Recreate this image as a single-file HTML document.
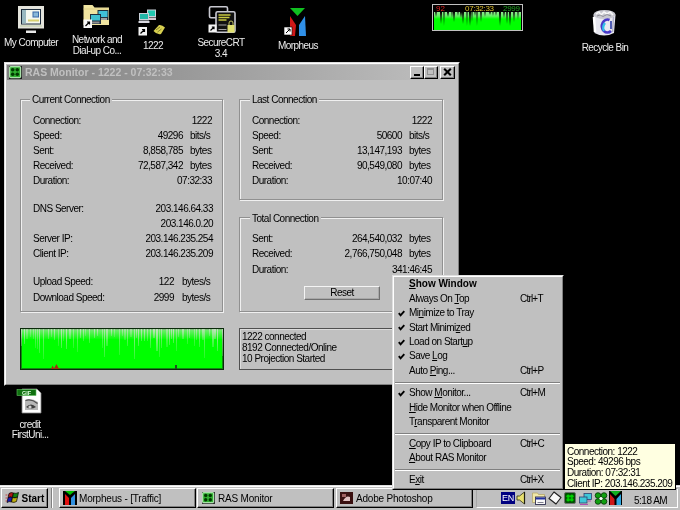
<!DOCTYPE html>
<html><head><meta charset="utf-8">
<style>
html,body{margin:0;padding:0;}
body{width:680px;height:510px;background:#000;position:relative;overflow:hidden;font-family:"Liberation Sans",sans-serif;}
.a{position:absolute;}
.t{position:absolute;font-size:10px;line-height:12px;letter-spacing:-0.5px;white-space:nowrap;color:#000;}
.r{text-align:right;}
.dl{position:absolute;color:#ececec;font-size:10px;line-height:12px;letter-spacing:-0.55px;white-space:nowrap;text-align:center;width:80px;}
.gb{position:absolute;border:1px solid #909090;box-shadow:1px 1px 0 #f0f0f0 inset, 1px 1px 0 #f0f0f0;}
.gl{position:absolute;background:#c0c0c0;padding:0 2px;font-size:10px;line-height:12px;letter-spacing:-0.5px;white-space:nowrap;}
.raised{position:absolute;box-sizing:border-box;background:#c0c0c0;border-top:1px solid #fff;border-left:1px solid #fff;border-right:1px solid #000;border-bottom:1px solid #000;}
.raised::after{content:"";position:absolute;left:0;top:0;right:0;bottom:0;border-right:1px solid #808080;border-bottom:1px solid #808080;}
u{text-decoration:underline;text-underline-offset:1px;text-decoration-thickness:1px;}
.mi{position:absolute;left:409px;font-size:10px;line-height:12px;letter-spacing:-0.5px;white-space:nowrap;color:#000;}
.mk{position:absolute;left:520px;font-size:10px;line-height:12px;letter-spacing:-0.8px;white-space:nowrap;color:#000;}
.ck{position:absolute;left:397.5px;width:7px;height:7px;}
</style></head><body><div id="wrap" style="position:absolute;left:0;top:0;width:680px;height:510px;background:#000;will-change:transform;">

<!-- ============ DESKTOP ICONS ============ -->

<!-- My Computer -->
<svg class="a" style="left:18px;top:6px;" width="27" height="28" viewBox="0 0 27 28">
  <rect x="0" y="0" width="26" height="22.5" fill="#e4e4dc"/>
  <rect x="3" y="3" width="20" height="15.5" fill="#1c2c3c"/>
  <rect x="4" y="4" width="18" height="13.5" fill="#f4f8f0"/>
  <rect x="4" y="4" width="4" height="13.5" fill="#98b8c0"/>
  <rect x="14.5" y="5.5" width="6.5" height="6" fill="#3868a8"/>
  <rect x="15.5" y="6.5" width="4.5" height="4" fill="#88b8d8"/>
  <rect x="10" y="13.5" width="11" height="2" fill="#d8d070"/>
  <rect x="2" y="19" width="22" height="2" fill="#d0d8c0"/>
  <rect x="8" y="24.5" width="10" height="2.5" fill="#e8e8e8"/>
</svg>
<div class="dl" style="left:-9px;top:37px;">My Computer</div>

<!-- Network and Dial-up -->
<svg class="a" style="left:82px;top:2px;" width="30" height="27" viewBox="0 0 30 27">
  <path d="M1.5 3 h9 l2 2.5 h14.5 v17.5 h-25.5 z" fill="#f0e4a0"/>
  <path d="M1.5 7 h25.5" stroke="#d8c880" stroke-width="0.8"/>
  <rect x="15.5" y="8" width="11" height="10" fill="#203040"/>
  <rect x="16.5" y="9" width="9" height="6" fill="#40c0d8"/>
  <rect x="17" y="16" width="8" height="2" fill="#a0a0a0"/>
  <rect x="8" y="12" width="11" height="10" fill="#203040"/>
  <rect x="9" y="13" width="9" height="5.5" fill="#40c0d0"/>
  <rect x="9.5" y="19.5" width="8" height="2" fill="#909090"/>
  <rect x="1.5" y="17.5" width="8.5" height="8.5" fill="#f8f8f8"/>
  <path d="M3.5 24 l4 -4 m-2.5 0 h2.5 v2.5" stroke="#000" stroke-width="1.2" fill="none"/>
</svg>
<div class="dl" style="left:57px;top:33.5px;">Network and</div>
<div class="dl" style="left:57px;top:44.5px;">Dial-up Co...</div>

<!-- 1222 -->
<svg class="a" style="left:138px;top:9px;" width="29" height="27" viewBox="0 0 29 27">
  <rect x="9" y="0.5" width="9" height="8" fill="#c8d0d8"/>
  <rect x="10" y="1.5" width="7" height="5.5" fill="#20c8b0"/>
  <rect x="9" y="9" width="9" height="2" fill="#d0c8d0"/>
  <rect x="1" y="4" width="10" height="7.5" fill="#c8d0d8"/>
  <rect x="2" y="5" width="8" height="5" fill="#20b8a8"/>
  <rect x="0.5" y="12" width="11" height="2" fill="#d8d8e0"/>
  <rect x="0.5" y="18" width="8.5" height="8.5" fill="#f4f4f4"/>
  <path d="M2.5 24.5 l4 -4 m-2.5 0 h2.5 v2.5" stroke="#000" stroke-width="1.2" fill="none"/>
  <path d="M15.5 22 L21 16 Q24 15.5 27 18.5 L23 25 Q19 26 15.5 22 Z" fill="#d8d050"/>
  <path d="M18 21 l4 -3 M19.5 23 l4 -3" stroke="#707020" stroke-width="0.8"/>
</svg>
<div class="dl" style="left:113px;top:40px;">1222</div>

<!-- SecureCRT -->
<svg class="a" style="left:207px;top:5px;" width="30" height="29" viewBox="0 0 30 29">
  <rect x="2.5" y="1.8" width="18" height="11" rx="1.5" fill="none" stroke="#c8c8d0" stroke-width="1.6"/>
  <rect x="9" y="6.8" width="19" height="20.5" rx="1.5" fill="#101010" stroke="#c8c8d0" stroke-width="1.6"/>
  <path d="M11.5 10 h12 M11.5 12.5 h11 M11.5 15 h8" stroke="#c8c840" stroke-width="1.3"/>
  <path d="M11.5 20 h8 M11.5 24.5 h8" stroke="#a0a0a0" stroke-width="1"/>
  <rect x="20.5" y="20" width="7" height="7.5" fill="#e0e070"/>
  <path d="M22 20 v-2 a2 2 0 0 1 4 0 v2" stroke="#c0c060" stroke-width="1" fill="none"/>
  <rect x="1.5" y="19.5" width="8" height="8" fill="#f4f4f4"/>
  <path d="M3.5 25.5 l3.5 -3.5 m-2.2 0 h2.2 v2.2" stroke="#000" stroke-width="1.2" fill="none"/>
</svg>
<div class="dl" style="left:181px;top:37px;">SecureCRT</div>
<div class="dl" style="left:181px;top:47.5px;">3.4</div>

<!-- Morpheus -->
<svg class="a" style="left:283px;top:7px;" width="26" height="30" viewBox="0 0 26 30">
  <path d="M7 1 L22 1 L14.5 9 Z" fill="#10c020"/>
  <path d="M7 9 L13 18 L12 29 L7 29 Z" fill="#d01818"/>
  <path d="M22 9 L16 18 L16 29 L23 29 Z" fill="#3090e8"/>
  <rect x="1" y="20" width="8" height="8" fill="#fff" stroke="#000" stroke-width="0.6"/>
  <path d="M3 26 l4 -4 m-2.5 0 h2.5 v2.5" stroke="#000" stroke-width="1" fill="none"/>
</svg>
<div class="dl" style="left:258px;top:39.5px;">Morpheus</div>

<!-- Monitor widget -->
<div class="a" style="left:432px;top:4px;width:91px;height:27px;box-sizing:border-box;border:1px solid #c0c0c0;background:#000;overflow:hidden;">
  <div class="a" style="left:1px;top:7px;width:87px;height:18px;background:linear-gradient(#90e890 0,#60f060 4px,#00ff00 7px);"></div>
  <svg class="a" style="left:1px;top:7px;" width="87" height="18" viewBox="0 0 87 18">
    <path d="M1.2 0 L2.8 0 L2.0 5 Z M6.0 0 L8.0 0 L7.0 12 Z M9.4 0 L10.6 0 L10.0 14 Z M13.0 0 L15.0 0 L14.0 5 Z M17.4 0 L18.6 0 L18.0 6 Z M19.0 0 L21.0 0 L20.0 10 Z M23.4 0 L24.6 0 L24.0 4 Z M26.0 0 L28.0 0 L27.0 6 Z M28.0 0 L30.0 0 L29.0 12 Z M32.4 0 L33.6 0 L33.0 14 Z M35.0 0 L37.0 0 L36.0 14 Z M37.4 0 L38.6 0 L38.0 10 Z M40.4 0 L41.6 0 L41.0 4 Z M42.4 0 L43.6 0 L43.0 14 Z M46.2 0 L47.8 0 L47.0 10 Z M50.4 0 L51.6 0 L51.0 5 Z M55.2 0 L56.8 0 L56.0 3 Z M58.4 0 L59.6 0 L59.0 4 Z M61.4 0 L62.6 0 L62.0 4 Z M65.0 0 L67.0 0 L66.0 14 Z M69.2 0 L70.8 0 L70.0 6 Z M72.2 0 L73.8 0 L73.0 12 Z M75.0 0 L77.0 0 L76.0 14 Z M79.2 0 L80.8 0 L80.0 10 Z M83.4 0 L84.6 0 L84.0 8 Z " fill="#000"/>
  </svg>
  <div class="a" style="left:3px;top:-1px;font-size:8px;line-height:10px;color:#e02020;">92</div>
  <div class="a" style="left:32px;top:-1px;font-size:8px;line-height:10px;color:#e0c030;letter-spacing:-0.3px;">07:32:33</div>
  <div class="a" style="left:70px;top:-1px;font-size:8px;line-height:10px;color:#20a020;letter-spacing:-0.3px;">2999</div>
</div>

<!-- Recycle Bin -->
<svg class="a" style="left:592px;top:9px;" width="25" height="28" viewBox="0 0 25 28">
  <path d="M1.5 6 L2.5 24 Q12 29 22 24 L23.5 6 Z" fill="#e8e8f0"/>
  <path d="M2 8 L3 23" stroke="#fff" stroke-width="2.5"/>
  <path d="M21.5 8 L20.5 23" stroke="#b0b0c8" stroke-width="1.5"/>
  <ellipse cx="12.5" cy="5.5" rx="11" ry="4.5" fill="#c8c8d0"/>
  <path d="M4 5 l3 -2 l2 3 l3 -3 l3 2 l3 -2 l3 3" stroke="#f8f8f8" stroke-width="1.6" fill="none"/>
  <path d="M5 7 l3 -1 l3 1.5 l4 -2 l4 1.5" stroke="#909098" stroke-width="1" fill="none"/>
  <path d="M17.5 11 a5.5 6.5 0 1 0 1.5 11" stroke="#4838c8" stroke-width="2.6" fill="none"/>
  <path d="M12 22 q-2 -4 1 -8" stroke="#30c0e8" stroke-width="2.2" fill="none"/>
  <path d="M19 12 v8" stroke="#2030a0" stroke-width="1.5"/>
</svg>
<div class="dl" style="left:565px;top:41.5px;">Recycle Bin</div>

<!-- credit FirstUni GIF -->
<svg class="a" style="left:16px;top:388px;" width="28" height="26" viewBox="0 0 28 26">
  <path d="M6 1 h15 l4 4 v20 h-19 z" fill="#fff" stroke="#808080" stroke-width="0.8"/>
  <path d="M9 12 q6 -3 13 2 v8 h-13 z" fill="#b8b8b8"/>
  <path d="M9.5 12.5 q6 -2 12 3" stroke="#505050" stroke-width="1.2" fill="none"/>
  <path d="M10 19 q5 -5 10 0 q-5 3 -10 0 z" fill="#404040"/>
  <circle cx="14" cy="19" r="1.6" fill="#d0d0d0"/>
  <rect x="1" y="1.5" width="19" height="6" fill="#107010" stroke="#60c060" stroke-width="0.6"/>
  <text x="10.5" y="6.5" font-size="5.5" font-family="Liberation Sans" font-weight="bold" fill="#e0ffe0" text-anchor="middle">GIF</text>
</svg>
<div class="dl" style="left:-10px;top:419px;">credit</div>
<div class="dl" style="left:-10px;top:429px;">FirstUni...</div>


<!-- ============ WINDOW ============ -->
<div class="a" style="left:4px;top:62px;width:456px;height:324px;background:#c0c0c0;box-sizing:border-box;border-top:1px solid #dfdfdf;border-left:1px solid #dfdfdf;border-right:1px solid #000;border-bottom:1px solid #000;">
  <div class="a" style="left:0;top:0;right:0;bottom:0;border-top:1px solid #fff;border-left:1px solid #fff;border-right:1px solid #808080;border-bottom:1px solid #808080;"></div>
</div>
<div class="a" style="left:7px;top:65px;width:450px;height:15px;background:linear-gradient(to right,#808080,#c0c0c0);"></div>
<div class="a" style="left:25px;top:65px;font-size:10.5px;line-height:15px;font-weight:bold;color:#c0c0c0;white-space:nowrap;">RAS Monitor - 1222 - 07:32:33</div>

<!-- title icon -->
<svg class="a" style="left:9px;top:66px;" width="13" height="13" viewBox="0 0 13 13">
  <rect x="0" y="0" width="13" height="13" fill="#202020"/>
  <rect x="0.6" y="0.6" width="11" height="11" rx="1.2" fill="#30b030" stroke="#a8e0a8" stroke-width="1.2"/>
  <circle cx="3.7" cy="3.7" r="1.8" fill="#003a00"/><circle cx="8.3" cy="3.7" r="1.8" fill="#003a00"/>
  <circle cx="3.7" cy="8.3" r="1.8" fill="#003a00"/><circle cx="8.3" cy="8.3" r="1.8" fill="#003a00"/>
</svg>
<!-- caption buttons -->
<div class="raised" style="left:410px;top:66px;width:14px;height:13px;"></div>
<div class="a" style="left:414px;top:74px;width:6px;height:2px;background:#000;"></div>
<div class="raised" style="left:424px;top:66px;width:14px;height:13px;"></div>
<div class="a" style="left:427px;top:68px;width:7px;height:7px;box-sizing:border-box;border:1px solid #909090;border-top-width:2px;"></div>
<div class="raised" style="left:440px;top:66px;width:15px;height:13px;"></div>
<svg class="a" style="left:443px;top:68px;" width="9" height="8" viewBox="0 0 9 8"><path d="M1.2 0.8 L7.8 7.2 M7.8 0.8 L1.2 7.2" stroke="#000" stroke-width="2.1"/></svg>
<!-- group boxes -->
<div class="gb" style="left:20px;top:99px;width:201px;height:211px;"></div>
<div class="gl" style="left:30px;top:94px;">Current Connection</div>
<div class="gb" style="left:239px;top:99px;width:202px;height:99px;"></div>
<div class="gl" style="left:250px;top:94px;">Last Connection</div>
<div class="gb" style="left:239px;top:217px;width:202px;height:93px;"></div>
<div class="gl" style="left:250px;top:213px;">Total Connection</div>

<!-- current connection -->
<div class="t" style="left:33px;top:115px;">Connection:</div>
<div class="t" style="left:33px;top:130px;">Speed:</div>
<div class="t" style="left:33px;top:145px;">Sent:</div>
<div class="t" style="left:33px;top:160px;">Received:</div>
<div class="t" style="left:33px;top:175px;">Duration:</div>
<div class="t r" style="right:468px;top:115px;">1222</div>
<div class="t r" style="right:497px;top:130px;">49296</div>
<div class="t" style="left:190px;top:130px;">bits/s</div>
<div class="t r" style="right:497px;top:145px;">8,858,785</div>
<div class="t" style="left:190px;top:145px;">bytes</div>
<div class="t r" style="right:497px;top:160px;">72,587,342</div>
<div class="t" style="left:190px;top:160px;">bytes</div>
<div class="t r" style="right:468px;top:175px;">07:32:33</div>

<div class="t" style="left:33px;top:203px;">DNS Server:</div>
<div class="t r" style="right:467px;top:203px;">203.146.64.33</div>
<div class="t r" style="right:467px;top:218px;">203.146.0.20</div>
<div class="t" style="left:33px;top:233px;">Server IP:</div>
<div class="t r" style="right:467px;top:233px;">203.146.235.254</div>
<div class="t" style="left:33px;top:248px;">Client IP:</div>
<div class="t r" style="right:467px;top:248px;">203.146.235.209</div>
<div class="t" style="left:33px;top:276px;">Upload Speed:</div>
<div class="t r" style="right:506px;top:276px;">122</div>
<div class="t" style="left:182px;top:276px;">bytes/s</div>
<div class="t" style="left:33px;top:291.5px;">Download Speed:</div>
<div class="t r" style="right:506px;top:291.5px;">2999</div>
<div class="t" style="left:182px;top:291.5px;">bytes/s</div>

<!-- last connection -->
<div class="t" style="left:252px;top:115px;">Connection:</div>
<div class="t" style="left:252px;top:130px;">Speed:</div>
<div class="t" style="left:252px;top:145px;">Sent:</div>
<div class="t" style="left:252px;top:160px;">Received:</div>
<div class="t" style="left:252px;top:175px;">Duration:</div>
<div class="t r" style="right:248px;top:115px;">1222</div>
<div class="t r" style="right:278px;top:130px;">50600</div>
<div class="t" style="left:409px;top:130px;">bits/s</div>
<div class="t r" style="right:278px;top:145px;">13,147,193</div>
<div class="t" style="left:409px;top:145px;">bytes</div>
<div class="t r" style="right:278px;top:160px;">90,549,080</div>
<div class="t" style="left:409px;top:160px;">bytes</div>
<div class="t r" style="right:248px;top:175px;">10:07:40</div>

<!-- total connection -->
<div class="t" style="left:252px;top:233px;">Sent:</div>
<div class="t" style="left:252px;top:248px;">Received:</div>
<div class="t" style="left:252px;top:264px;">Duration:</div>
<div class="t r" style="right:278px;top:233px;">264,540,032</div>
<div class="t" style="left:409px;top:233px;">bytes</div>
<div class="t r" style="right:278px;top:248px;">2,766,750,048</div>
<div class="t" style="left:409px;top:248px;">bytes</div>
<div class="t r" style="right:248px;top:264px;">341:46:45</div>

<!-- reset button -->
<div class="a" style="left:304px;top:286px;width:76px;height:14px;box-sizing:border-box;border-top:1px solid #f4f4f4;border-left:1px solid #f4f4f4;border-right:1px solid #707070;border-bottom:1px solid #707070;"><div class="a" style="left:0;top:0;right:0;bottom:0;border-right:1px solid #a8a8a8;border-bottom:1px solid #a8a8a8;"></div></div>
<div class="t" style="left:304px;top:287px;width:76px;text-align:center;">Reset</div>

<!-- graph -->
<div class="a" id="graph" style="left:20px;top:328px;width:204px;height:42px;box-sizing:border-box;border:1px solid #0a2a0a;box-shadow:inset 0 0 0 1px #108a10;background:#00ff00;overflow:hidden;"><div class="a" style="left:0px;top:0;width:1px;height:17px;background:linear-gradient(rgba(215,228,212,0.85),rgba(200,235,195,0.3));"></div><div class="a" style="left:3px;top:0;width:1px;height:15px;background:linear-gradient(rgba(215,228,212,0.85),rgba(200,235,195,0.3));"></div><div class="a" style="left:5px;top:0;width:2px;height:10px;background:linear-gradient(rgba(215,228,212,0.55),rgba(200,235,195,0.19));"></div><div class="a" style="left:9px;top:0;width:1px;height:8px;background:linear-gradient(rgba(215,228,212,0.55),rgba(200,235,195,0.19));"></div><div class="a" style="left:12px;top:0;width:1px;height:10px;background:linear-gradient(rgba(215,228,212,0.55),rgba(200,235,195,0.19));"></div><div class="a" style="left:14px;top:0;width:1px;height:19px;background:linear-gradient(rgba(215,228,212,0.55),rgba(200,235,195,0.19));"></div><div class="a" style="left:16px;top:0;width:1px;height:20px;background:linear-gradient(rgba(215,228,212,0.55),rgba(200,235,195,0.19));"></div><div class="a" style="left:18px;top:0;width:1px;height:24px;background:linear-gradient(rgba(215,228,212,0.7),rgba(200,235,195,0.24));"></div><div class="a" style="left:22px;top:0;width:1px;height:30px;background:linear-gradient(rgba(215,228,212,0.55),rgba(200,235,195,0.19));"></div><div class="a" style="left:27px;top:0;width:1px;height:10px;background:linear-gradient(rgba(215,228,212,0.7),rgba(200,235,195,0.24));"></div><div class="a" style="left:30px;top:0;width:1px;height:8px;background:linear-gradient(rgba(215,228,212,0.7),rgba(200,235,195,0.24));"></div><div class="a" style="left:33px;top:0;width:1px;height:11px;background:linear-gradient(rgba(215,228,212,0.85),rgba(200,235,195,0.3));"></div><div class="a" style="left:37px;top:0;width:1px;height:17px;background:linear-gradient(rgba(215,228,212,0.55),rgba(200,235,195,0.19));"></div><div class="a" style="left:40px;top:0;width:1px;height:19px;background:linear-gradient(rgba(215,228,212,0.85),rgba(200,235,195,0.3));"></div><div class="a" style="left:42px;top:0;width:1px;height:12px;background:linear-gradient(rgba(215,228,212,0.55),rgba(200,235,195,0.19));"></div><div class="a" style="left:45px;top:0;width:1px;height:20px;background:linear-gradient(rgba(215,228,212,0.85),rgba(200,235,195,0.3));"></div><div class="a" style="left:48px;top:0;width:2px;height:10px;background:linear-gradient(rgba(215,228,212,0.7),rgba(200,235,195,0.24));"></div><div class="a" style="left:52px;top:0;width:1px;height:19px;background:linear-gradient(rgba(215,228,212,0.55),rgba(200,235,195,0.19));"></div><div class="a" style="left:56px;top:0;width:1px;height:23px;background:linear-gradient(rgba(215,228,212,0.55),rgba(200,235,195,0.19));"></div><div class="a" style="left:59px;top:0;width:1px;height:9px;background:linear-gradient(rgba(215,228,212,0.85),rgba(200,235,195,0.3));"></div><div class="a" style="left:62px;top:0;width:1px;height:12px;background:linear-gradient(rgba(215,228,212,0.7),rgba(200,235,195,0.24));"></div><div class="a" style="left:64px;top:0;width:1px;height:7px;background:linear-gradient(rgba(215,228,212,0.55),rgba(200,235,195,0.19));"></div><div class="a" style="left:68px;top:0;width:1px;height:14px;background:linear-gradient(rgba(215,228,212,0.7),rgba(200,235,195,0.24));"></div><div class="a" style="left:73px;top:0;width:1px;height:9px;background:linear-gradient(rgba(215,228,212,0.85),rgba(200,235,195,0.3));"></div><div class="a" style="left:76px;top:0;width:1px;height:7px;background:linear-gradient(rgba(215,228,212,0.85),rgba(200,235,195,0.3));"></div><div class="a" style="left:81px;top:0;width:1px;height:19px;background:linear-gradient(rgba(215,228,212,0.55),rgba(200,235,195,0.19));"></div><div class="a" style="left:83px;top:0;width:1px;height:28px;background:linear-gradient(rgba(215,228,212,0.7),rgba(200,235,195,0.24));"></div><div class="a" style="left:85px;top:0;width:2px;height:17px;background:linear-gradient(rgba(215,228,212,0.7),rgba(200,235,195,0.24));"></div><div class="a" style="left:90px;top:0;width:1px;height:7px;background:linear-gradient(rgba(215,228,212,0.85),rgba(200,235,195,0.3));"></div><div class="a" style="left:93px;top:0;width:1px;height:8px;background:linear-gradient(rgba(215,228,212,0.55),rgba(200,235,195,0.19));"></div><div class="a" style="left:98px;top:0;width:1px;height:26px;background:linear-gradient(rgba(215,228,212,0.55),rgba(200,235,195,0.19));"></div><div class="a" style="left:101px;top:0;width:1px;height:7px;background:linear-gradient(rgba(215,228,212,0.7),rgba(200,235,195,0.24));"></div><div class="a" style="left:103px;top:0;width:2px;height:11px;background:linear-gradient(rgba(215,228,212,0.55),rgba(200,235,195,0.19));"></div><div class="a" style="left:106px;top:0;width:1px;height:17px;background:linear-gradient(rgba(215,228,212,0.7),rgba(200,235,195,0.24));"></div><div class="a" style="left:109px;top:0;width:2px;height:8px;background:linear-gradient(rgba(215,228,212,0.55),rgba(200,235,195,0.19));"></div><div class="a" style="left:113px;top:0;width:1px;height:30px;background:linear-gradient(rgba(215,228,212,0.7),rgba(200,235,195,0.24));"></div><div class="a" style="left:115px;top:0;width:1px;height:9px;background:linear-gradient(rgba(215,228,212,0.85),rgba(200,235,195,0.3));"></div><div class="a" style="left:117px;top:0;width:1px;height:17px;background:linear-gradient(rgba(215,228,212,0.85),rgba(200,235,195,0.3));"></div><div class="a" style="left:120px;top:0;width:1px;height:12px;background:linear-gradient(rgba(215,228,212,0.85),rgba(200,235,195,0.3));"></div><div class="a" style="left:123px;top:0;width:1px;height:12px;background:linear-gradient(rgba(215,228,212,0.85),rgba(200,235,195,0.3));"></div><div class="a" style="left:126px;top:0;width:1px;height:12px;background:linear-gradient(rgba(215,228,212,0.7),rgba(200,235,195,0.24));"></div><div class="a" style="left:129px;top:0;width:1px;height:19px;background:linear-gradient(rgba(215,228,212,0.7),rgba(200,235,195,0.24));"></div><div class="a" style="left:132px;top:0;width:2px;height:9px;background:linear-gradient(rgba(215,228,212,0.85),rgba(200,235,195,0.3));"></div><div class="a" style="left:135px;top:0;width:2px;height:22px;background:linear-gradient(rgba(215,228,212,0.85),rgba(200,235,195,0.3));"></div><div class="a" style="left:138px;top:0;width:1px;height:28px;background:linear-gradient(rgba(215,228,212,0.55),rgba(200,235,195,0.19));"></div><div class="a" style="left:140px;top:0;width:1px;height:19px;background:linear-gradient(rgba(215,228,212,0.7),rgba(200,235,195,0.24));"></div><div class="a" style="left:145px;top:0;width:2px;height:18px;background:linear-gradient(rgba(215,228,212,0.55),rgba(200,235,195,0.19));"></div><div class="a" style="left:148px;top:0;width:1px;height:16px;background:linear-gradient(rgba(215,228,212,0.85),rgba(200,235,195,0.3));"></div><div class="a" style="left:150px;top:0;width:1px;height:10px;background:linear-gradient(rgba(215,228,212,0.85),rgba(200,235,195,0.3));"></div><div class="a" style="left:152px;top:0;width:1px;height:14px;background:linear-gradient(rgba(215,228,212,0.85),rgba(200,235,195,0.3));"></div><div class="a" style="left:155px;top:0;width:1px;height:22px;background:linear-gradient(rgba(215,228,212,0.55),rgba(200,235,195,0.19));"></div><div class="a" style="left:157px;top:0;width:1px;height:8px;background:linear-gradient(rgba(215,228,212,0.7),rgba(200,235,195,0.24));"></div><div class="a" style="left:161px;top:0;width:2px;height:10px;background:linear-gradient(rgba(215,228,212,0.7),rgba(200,235,195,0.24));"></div><div class="a" style="left:166px;top:0;width:1px;height:15px;background:linear-gradient(rgba(215,228,212,0.55),rgba(200,235,195,0.19));"></div><div class="a" style="left:168px;top:0;width:1px;height:9px;background:linear-gradient(rgba(215,228,212,0.7),rgba(200,235,195,0.24));"></div><div class="a" style="left:173px;top:0;width:1px;height:17px;background:linear-gradient(rgba(215,228,212,0.55),rgba(200,235,195,0.19));"></div><div class="a" style="left:175px;top:0;width:1px;height:11px;background:linear-gradient(rgba(215,228,212,0.7),rgba(200,235,195,0.24));"></div><div class="a" style="left:178px;top:0;width:1px;height:18px;background:linear-gradient(rgba(215,228,212,0.7),rgba(200,235,195,0.24));"></div><div class="a" style="left:181px;top:0;width:2px;height:11px;background:linear-gradient(rgba(215,228,212,0.7),rgba(200,235,195,0.24));"></div><div class="a" style="left:183px;top:0;width:1px;height:29px;background:linear-gradient(rgba(215,228,212,0.55),rgba(200,235,195,0.19));"></div><div class="a" style="left:188px;top:0;width:1px;height:7px;background:linear-gradient(rgba(215,228,212,0.7),rgba(200,235,195,0.24));"></div><div class="a" style="left:191px;top:0;width:2px;height:18px;background:linear-gradient(rgba(215,228,212,0.7),rgba(200,235,195,0.24));"></div><div class="a" style="left:193px;top:0;width:2px;height:10px;background:linear-gradient(rgba(215,228,212,0.85),rgba(200,235,195,0.3));"></div><div class="a" style="left:196px;top:0;width:1px;height:22px;background:linear-gradient(rgba(215,228,212,0.85),rgba(200,235,195,0.3));"></div><div class="a" style="left:201px;top:0;width:2px;height:27px;background:linear-gradient(rgba(215,228,212,0.7),rgba(200,235,195,0.24));"></div><div class="a" style="left:0;top:0;width:202px;height:10px;background:linear-gradient(rgba(205,222,200,0.6),rgba(205,222,200,0.05));"></div><div class="a" style="left:30px;top:35px;width:10px;height:5px;background:#a03010;clip-path:polygon(0 100%,15% 30%,30% 90%,55% 0,75% 80%,100% 100%);"></div><div class="a" style="left:154px;top:36px;width:2px;height:4px;background:#205020;"></div></div>

<!-- listbox -->
<div class="a" style="left:239px;top:328px;width:204px;height:42px;box-sizing:border-box;border:1px solid #505050;">
  <div class="a" style="left:0;top:0;right:0;bottom:0;border-top:1px solid #dcdcdc;border-left:1px solid #dcdcdc;"></div>
</div>
<div class="t" style="left:242px;top:331px;line-height:11px;">1222 connected<br>8192 Connected/Online<br>10 Projection Started</div>

<!-- ============ TASKBAR ============ -->

<div class="a" style="left:0;top:485px;width:680px;height:25px;background:#c0c0c0;border-top:1px solid #dfdfdf;box-sizing:border-box;">
  <div class="a" style="left:0;top:0;width:680px;height:1px;background:#fff;"></div>
</div>
<!-- start button -->
<div class="raised" style="left:1px;top:488px;width:47px;height:20px;"></div>
<svg class="a" style="left:5px;top:491px;" width="14" height="13" viewBox="0 0 14 13">
  <path d="M4 2.5 Q6 1 8.5 2 L7.5 6.5 Q5 5.5 3 6.8 Z" fill="#b01818" stroke="#000" stroke-width="0.7"/>
  <path d="M8.5 2 Q11 3 13.5 1.5 L12.5 6 Q10 7.5 7.5 6.5 Z" fill="#108010" stroke="#000" stroke-width="0.7"/>
  <path d="M3 6.8 Q5 5.5 7.5 6.5 L6.5 11 Q4 10 2 11.5 Z" fill="#1818b0" stroke="#000" stroke-width="0.7"/>
  <path d="M7.5 6.5 Q10 7.5 12.5 6 L11.5 10.5 Q9 12 6.5 11 Z" fill="#c0b010" stroke="#000" stroke-width="0.7"/>
  <path d="M0.5 4 h2 M0.5 7 h2 M0.5 10 h1.5" stroke="#c04040" stroke-width="0.9"/>
</svg>
<div class="a" style="left:21.5px;top:493px;font-size:10px;line-height:12px;font-weight:bold;white-space:nowrap;">Start</div>
<!-- grip -->
<div class="a" style="left:51px;top:488px;width:1px;height:20px;background:#808080;"></div>
<div class="a" style="left:52px;top:488px;width:1px;height:20px;background:#fff;"></div>

<!-- task buttons -->
<div class="raised" style="left:59px;top:488px;width:137px;height:20px;"></div>
<div class="raised" style="left:197px;top:488px;width:137px;height:20px;"></div>
<div class="raised" style="left:336px;top:488px;width:137px;height:20px;"></div>
<!-- morpheus icon -->
<svg class="a" style="left:63px;top:491px;" width="14" height="14" viewBox="0 0 14 14">
  <rect x="0" y="0" width="14" height="14" fill="#000"/>
  <path d="M2 0 L12 0 L7 4 Z" fill="#00c000"/>
  <path d="M2 3 L6 7 L6 14 L2 14 Z" fill="#e01010"/>
  <path d="M12 3 L8 7 L8 14 L12 14 Z" fill="#3090e0"/>
</svg>
<div class="t" style="left:79px;top:493px;letter-spacing:-0.2px;">Morpheus - [Traffic]</div>
<!-- RAS icon -->
<svg class="a" style="left:202px;top:492px;" width="13" height="12" viewBox="0 0 13 12">
  <rect x="0" y="0" width="13" height="12" fill="#303030"/>
  <rect x="0.6" y="0.6" width="11" height="10" rx="1" fill="#30b030" stroke="#a8e0a8" stroke-width="1.2"/>
  <circle cx="3.7" cy="3.5" r="1.7" fill="#003a00"/><circle cx="8.3" cy="3.5" r="1.7" fill="#003a00"/>
  <circle cx="3.7" cy="7.7" r="1.7" fill="#003a00"/><circle cx="8.3" cy="7.7" r="1.7" fill="#003a00"/>
</svg>
<div class="t" style="left:218px;top:493px;letter-spacing:-0.2px;">RAS Monitor</div>
<!-- photoshop icon -->
<svg class="a" style="left:340px;top:492px;" width="13" height="12" viewBox="0 0 13 12">
  <rect x="0" y="0" width="13" height="12" fill="#3a1010"/>
  <path d="M3 9 Q6 3 10 5 L10 9 Z" fill="#e0c0c0"/>
  <rect x="2" y="2" width="4" height="3" fill="#a06060"/>
</svg>
<div class="t" style="left:356px;top:493px;letter-spacing:-0.2px;">Adobe Photoshop</div>
<!-- tray -->
<div class="a" style="left:476px;top:488px;width:202px;height:20px;box-sizing:border-box;border-top:1px solid #808080;border-left:1px solid #a8a8a8;border-right:1px solid #fff;border-bottom:1px solid #fff;"></div>
<div class="a" style="left:501px;top:492px;width:14px;height:12px;background:#000080;color:#fff;font-size:9px;line-height:12px;text-align:center;letter-spacing:-0.3px;">EN</div>
<svg class="a" style="left:516px;top:491px;" width="11" height="14" viewBox="0 0 11 14">
  <path d="M1 5 h2.5 l5 -4 v12 l-5 -4 h-2.5 z" fill="#e8e070" stroke="#404020" stroke-width="0.9"/>
  <path d="M8.5 1 v12" stroke="#202010" stroke-width="1.2"/>
</svg>
<svg class="a" style="left:532px;top:492px;" width="14" height="13" viewBox="0 0 14 13">
  <path d="M0.5 1 h5 l1 1.5 h6 v8 h-12 z" fill="#f0e8a8" stroke="#b0a060" stroke-width="0.7"/>
  <rect x="3.5" y="5" width="10" height="7.5" fill="#f8f8f8" stroke="#303050" stroke-width="0.9"/>
  <rect x="4" y="5.5" width="9" height="2" fill="#2030a0"/>
  <path d="M5.5 10.5 h6" stroke="#808090" stroke-width="1"/>
</svg>
<svg class="a" style="left:548px;top:491px;" width="14" height="14" viewBox="0 0 14 14">
  <path d="M6 1 L13 6.5 L8 13 L1 7.5 Z" fill="#f8f8f8" stroke="#202020" stroke-width="1.2" stroke-linejoin="round"/>
</svg>
<svg class="a" style="left:564px;top:492px;" width="12" height="12" viewBox="0 0 12 12">
  <rect x="0.5" y="0.5" width="11" height="11" rx="1.5" fill="#005000" stroke="#707070"/>
  <circle cx="4.2" cy="4.2" r="1.8" fill="#00d000"/><circle cx="7.8" cy="4.2" r="1.8" fill="#00d000"/>
  <circle cx="4.2" cy="7.8" r="1.8" fill="#00d000"/><circle cx="7.8" cy="7.8" r="1.8" fill="#00d000"/>
</svg>
<svg class="a" style="left:579px;top:493px;" width="13" height="12" viewBox="0 0 13 12">
  <rect x="5" y="0.5" width="7.5" height="6" fill="#40c8d8" stroke="#304070" stroke-width="0.8"/>
  <rect x="0.5" y="4" width="7.5" height="6" fill="#40c8d8" stroke="#304070" stroke-width="0.8"/>
  <path d="M1 11.5 h8 M9 8 h3" stroke="#b050b0" stroke-width="1"/>
</svg>
<svg class="a" style="left:594px;top:492px;" width="14" height="13" viewBox="0 0 14 13">
  <circle cx="4" cy="3.5" r="2.8" fill="#10a010" stroke="#003000" stroke-width="0.8"/>
  <circle cx="10" cy="3.5" r="2.8" fill="#10a010" stroke="#003000" stroke-width="0.8"/>
  <circle cx="4" cy="9.5" r="2.8" fill="#10a010" stroke="#003000" stroke-width="0.8"/>
  <circle cx="10" cy="9.5" r="2.8" fill="#10a010" stroke="#003000" stroke-width="0.8"/>
  <circle cx="7" cy="6.5" r="1.6" fill="#f0fff0"/>
</svg>
<svg class="a" style="left:609px;top:491px;" width="13" height="14" viewBox="0 0 13 14">
  <rect x="0" y="0" width="13" height="14" fill="#000"/>
  <path d="M1 0 L12 0 L6.5 5 Z" fill="#10b020"/>
  <path d="M1 3 L5.5 8 L5.5 14 L1 14 Z" fill="#d01818"/>
  <path d="M12 3 L7.5 8 L7.5 14 L12 14 Z" fill="#30a8e0"/>
</svg>
<div class="t" style="left:634px;top:494.5px;">5:18 AM</div>

<!-- tooltip -->
<div class="a" style="left:564px;top:443px;width:112px;height:47px;box-sizing:border-box;background:#ffffe1;border:1px solid #000;"></div>
<div class="a" style="left:567px;top:446.5px;font-size:10px;line-height:10.9px;letter-spacing:-0.5px;white-space:nowrap;">Connection: 1222<br>Speed: 49296 bps<br>Duration: 07:32:31<br>Client IP: 203.146.235.209</div>


<!-- ============ MENU ============ -->

<div class="a" style="left:392px;top:275px;width:172px;height:215px;box-sizing:border-box;background:#c0c0c0;border-top:1px solid #dfdfdf;border-left:1px solid #dfdfdf;border-right:1px solid #000;border-bottom:1px solid #000;">
  <div class="a" style="left:0;top:0;right:0;bottom:0;border-top:1px solid #fff;border-left:1px solid #fff;border-right:1px solid #808080;border-bottom:1px solid #808080;"></div>
</div>
<div class="mi" style="top:278.4px;"><b style="letter-spacing:0"><u>S</u>how Window</b></div>
<div class="mi" style="top:292.8px;">Always On <u>T</u>op</div>
<div class="mk" style="top:292.8px;">Ctrl+T</div>
<div class="mi" style="top:307.2px;">Mi<u>n</u>imize to Tray</div>
<svg class="ck" style="top:310.0px;" viewBox="0 0 7 7"><path d="M0.8 3.2 L2.6 5.4 L6.3 1.2" stroke="#000" stroke-width="1.9" fill="none"/></svg>
<div class="mi" style="top:321.6px;">Start Minimi<u>z</u>ed</div>
<svg class="ck" style="top:324.4px;" viewBox="0 0 7 7"><path d="M0.8 3.2 L2.6 5.4 L6.3 1.2" stroke="#000" stroke-width="1.9" fill="none"/></svg>
<div class="mi" style="top:336.0px;">Load on Start<u>u</u>p</div>
<svg class="ck" style="top:338.8px;" viewBox="0 0 7 7"><path d="M0.8 3.2 L2.6 5.4 L6.3 1.2" stroke="#000" stroke-width="1.9" fill="none"/></svg>
<div class="mi" style="top:350.4px;">Save <u>L</u>og</div>
<svg class="ck" style="top:353.2px;" viewBox="0 0 7 7"><path d="M0.8 3.2 L2.6 5.4 L6.3 1.2" stroke="#000" stroke-width="1.9" fill="none"/></svg>
<div class="mi" style="top:364.8px;">Auto <u>P</u>ing...</div>
<div class="mk" style="top:364.8px;">Ctrl+P</div>
<div class="mi" style="top:387.2px;">Show <u>M</u>onitor...</div>
<div class="mk" style="top:387.2px;">Ctrl+M</div>
<svg class="ck" style="top:390.0px;" viewBox="0 0 7 7"><path d="M0.8 3.2 L2.6 5.4 L6.3 1.2" stroke="#000" stroke-width="1.9" fill="none"/></svg>
<div class="mi" style="top:401.6px;"><u>H</u>ide Monitor when Offline</div>
<div class="mi" style="top:416.0px;">T<u>r</u>ansparent Monitor</div>
<div class="mi" style="top:438.4px;"><u>C</u>opy IP to Clipboard</div>
<div class="mk" style="top:438.4px;">Ctrl+C</div>
<div class="mi" style="top:452.0px;"><u>A</u>bout RAS Monitor</div>
<div class="mi" style="top:474.2px;">E<u>x</u>it</div>
<div class="mk" style="top:474.2px;">Ctrl+X</div>
<div class="a" style="left:395px;top:382px;width:165px;height:1px;background:#808080;border-bottom:1px solid #fff;"></div>
<div class="a" style="left:395px;top:433px;width:165px;height:1px;background:#808080;border-bottom:1px solid #fff;"></div>
<div class="a" style="left:395px;top:469px;width:165px;height:1px;background:#808080;border-bottom:1px solid #fff;"></div>


</div></body></html>
